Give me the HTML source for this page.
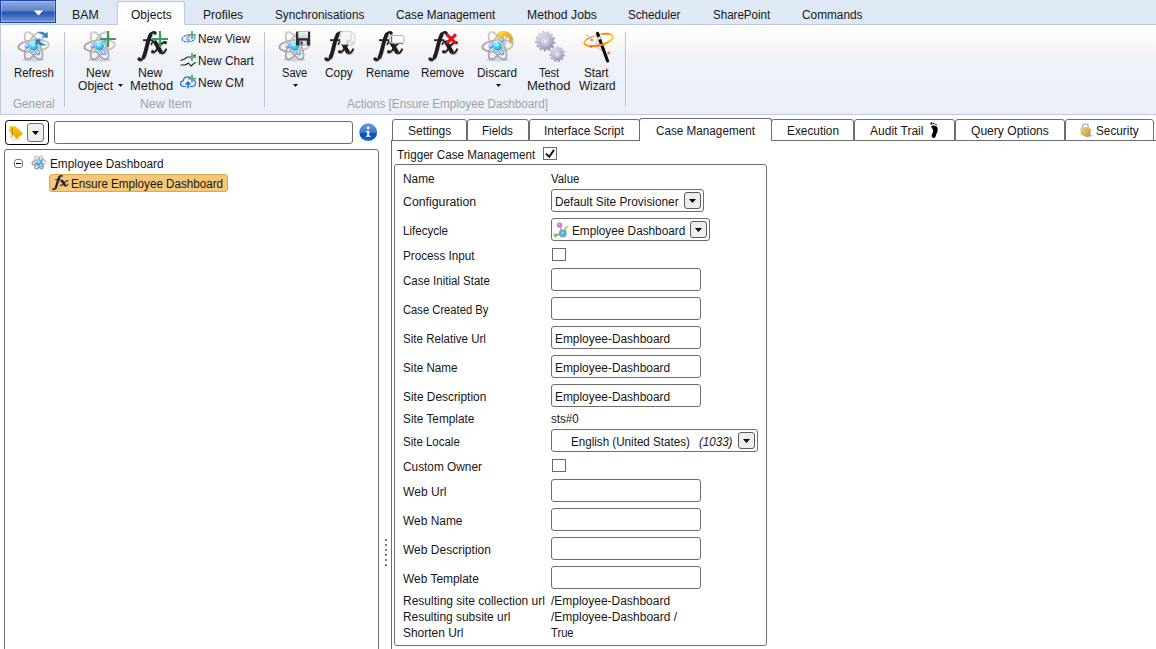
<!DOCTYPE html>
<html><head><meta charset='utf-8'><title>Objects</title><style>html,body{margin:0;padding:0}body{width:1156px;height:649px;position:relative;overflow:hidden;background:#fff;font-family:"Liberation Sans",sans-serif;font-size:12px}</style></head><body>
<div style='position:absolute;left:0px;top:0px;width:1156px;height:24px;box-sizing:border-box;background:#dfe9f5'></div>
<div style='position:absolute;left:0px;top:24px;width:1156px;height:1px;box-sizing:border-box;background:#bccbe0'></div>
<div style='position:absolute;left:0px;top:25px;width:1156px;height:89px;box-sizing:border-box;background:linear-gradient(to bottom,#ffffff 0%,#fdfdfe 8%,#f5f5f6 28.5%,#eff2f8 32.5%,#edf1f9 60%,#ebf0f9 100%)'></div>
<div style='position:absolute;left:0px;top:114px;width:1156px;height:1px;box-sizing:border-box;background:#bccbdf'></div>
<div style='position:absolute;left:0px;top:25px;width:1px;height:90px;box-sizing:border-box;background:#b9c9dc'></div>
<div style='position:absolute;left:0px;top:0px;width:56px;height:23px;box-sizing:border-box;background:linear-gradient(to bottom,#91a7dd 0%,#7d9ad8 18%,#5f86cc 45%,#2e5eb8 52%,#2c5cb6 60%,#5a80ca 85%,#7896d6 100%);border:1px solid #1b46ab;box-shadow:inset 0 0 0 1px rgba(255,255,255,.28)'></div>
<svg style='position:absolute;left:34px;top:9.5px;overflow:visible' width='9' height='6' viewBox='0 0 9 6'><path d='M0 .5H9L4.5 5.5Z' fill='#fff'/></svg>
<div style='position:absolute;left:117px;top:1px;width:68px;height:24px;box-sizing:border-box;background:linear-gradient(to bottom,#fbfcfe,#ffffff);border:1px solid #bccbe0;border-bottom:0;border-radius:3px 3px 0 0'></div>
<div style='position:absolute;left:64px;top:32px;width:1px;height:75px;box-sizing:border-box;background:#b5c5da'></div>
<div style='position:absolute;left:65px;top:32px;width:1px;height:75px;box-sizing:border-box;background:rgba(255,255,255,.45)'></div>
<div style='position:absolute;left:264px;top:32px;width:1px;height:75px;box-sizing:border-box;background:#b5c5da'></div>
<div style='position:absolute;left:265px;top:32px;width:1px;height:75px;box-sizing:border-box;background:rgba(255,255,255,.45)'></div>
<div style='position:absolute;left:625px;top:32px;width:1px;height:75px;box-sizing:border-box;background:#b5c5da'></div>
<div style='position:absolute;left:626px;top:32px;width:1px;height:75px;box-sizing:border-box;background:rgba(255,255,255,.45)'></div>
<div style='position:absolute;left:5px;top:120px;width:44px;height:25px;box-sizing:border-box;border:1px solid #000;border-radius:3.5px;background:#fff'></div>
<div style='position:absolute;left:27px;top:123px;width:17px;height:19px;box-sizing:border-box;border:1px solid #707070;border-radius:3px;background:#efefef'></div>
<svg style='position:absolute;left:32px;top:131px;overflow:visible' width='7' height='4' viewBox='0 0 7 4'><path d='M0 0H7L3.5 4Z' fill='#000'/></svg>
<div style='position:absolute;left:54px;top:121px;width:299px;height:23px;box-sizing:border-box;border:1px solid #6e6e6e;border-radius:3px;background:#fff'></div>
<div style='position:absolute;left:4px;top:149px;width:375px;height:520px;box-sizing:border-box;border:1px solid #6e6e6e;border-radius:3px;background:#fff'></div>
<div style='position:absolute;left:385px;top:539px;width:2px;height:2px;box-sizing:border-box;background:#7a7a7a'></div>
<div style='position:absolute;left:385px;top:544px;width:2px;height:2px;box-sizing:border-box;background:#7a7a7a'></div>
<div style='position:absolute;left:385px;top:549px;width:2px;height:2px;box-sizing:border-box;background:#7a7a7a'></div>
<div style='position:absolute;left:385px;top:554px;width:2px;height:2px;box-sizing:border-box;background:#7a7a7a'></div>
<div style='position:absolute;left:385px;top:559px;width:2px;height:2px;box-sizing:border-box;background:#7a7a7a'></div>
<div style='position:absolute;left:385px;top:564px;width:2px;height:2px;box-sizing:border-box;background:#7a7a7a'></div>
<div style='position:absolute;left:49px;top:174px;width:179px;height:18px;box-sizing:border-box;background:#f5c778;border:1px solid #d9a94e;border-radius:3px'></div>
<div style='position:absolute;left:14px;top:159px;width:9px;height:9px;box-sizing:border-box;border:1px solid #777;border-radius:3px;background:#fff'></div>
<div style='position:absolute;left:16px;top:163px;width:5px;height:1px;box-sizing:border-box;background:#000'></div>
<div style='position:absolute;left:391px;top:140px;width:800px;height:540px;box-sizing:border-box;border:1px solid #6e6e6e;background:#fff'></div>
<div style='position:absolute;left:392px;top:119px;width:75px;height:22px;box-sizing:border-box;border:1px solid #6e6e6e;border-radius:3px 3px 0 0;background:#fff'></div>
<div style='position:absolute;left:467px;top:119px;width:62px;height:22px;box-sizing:border-box;border:1px solid #6e6e6e;border-radius:3px 3px 0 0;background:#fff'></div>
<div style='position:absolute;left:529px;top:119px;width:111px;height:22px;box-sizing:border-box;border:1px solid #6e6e6e;border-radius:3px 3px 0 0;background:#fff'></div>
<div style='position:absolute;left:771px;top:119px;width:83px;height:22px;box-sizing:border-box;border:1px solid #6e6e6e;border-radius:3px 3px 0 0;background:#fff'></div>
<div style='position:absolute;left:854px;top:119px;width:101px;height:22px;box-sizing:border-box;border:1px solid #6e6e6e;border-radius:3px 3px 0 0;background:#fff'></div>
<div style='position:absolute;left:955px;top:119px;width:110px;height:22px;box-sizing:border-box;border:1px solid #6e6e6e;border-radius:3px 3px 0 0;background:#fff'></div>
<div style='position:absolute;left:1065px;top:119px;width:89px;height:22px;box-sizing:border-box;border:1px solid #6e6e6e;border-radius:3px 3px 0 0;background:#fff'></div>
<div style='position:absolute;left:639px;top:118px;width:133px;height:23px;box-sizing:border-box;border:1px solid #6e6e6e;border-bottom:0;border-radius:3px 3px 0 0;background:#fff'></div>
<div style='position:absolute;left:394px;top:164px;width:373px;height:482px;box-sizing:border-box;border:1px solid #6e6e6e;border-radius:3px;background:#fff'></div>
<div style='position:absolute;left:543px;top:147px;width:14px;height:13px;box-sizing:border-box;border:1px solid #6a6a6a;background:#fff'></div>
<svg style='position:absolute;left:543px;top:147px;overflow:visible' width='14' height='13' viewBox='0 0 14 13'><path d='M2.9 6.6L6.3 9.9L11 2.9' fill='none' stroke='#111' stroke-width='1.9'/></svg>
<div style='position:absolute;left:552px;top:248px;width:14px;height:13px;box-sizing:border-box;border:1px solid #6a6a6a;background:#fff'></div>
<div style='position:absolute;left:552px;top:459px;width:14px;height:13px;box-sizing:border-box;border:1px solid #6a6a6a;background:#fff'></div>
<div style='position:absolute;left:551px;top:268px;width:150px;height:23px;box-sizing:border-box;border:1px solid #6e6e6e;border-radius:3px;background:#fff'></div>
<div style='position:absolute;left:551px;top:297px;width:150px;height:23px;box-sizing:border-box;border:1px solid #6e6e6e;border-radius:3px;background:#fff'></div>
<div style='position:absolute;left:551px;top:326px;width:150px;height:23px;box-sizing:border-box;border:1px solid #6e6e6e;border-radius:3px;background:#fff'></div>
<div style='position:absolute;left:551px;top:355px;width:150px;height:23px;box-sizing:border-box;border:1px solid #6e6e6e;border-radius:3px;background:#fff'></div>
<div style='position:absolute;left:551px;top:384px;width:150px;height:23px;box-sizing:border-box;border:1px solid #6e6e6e;border-radius:3px;background:#fff'></div>
<div style='position:absolute;left:551px;top:479px;width:150px;height:23px;box-sizing:border-box;border:1px solid #6e6e6e;border-radius:3px;background:#fff'></div>
<div style='position:absolute;left:551px;top:508px;width:150px;height:23px;box-sizing:border-box;border:1px solid #6e6e6e;border-radius:3px;background:#fff'></div>
<div style='position:absolute;left:551px;top:537px;width:150px;height:23px;box-sizing:border-box;border:1px solid #6e6e6e;border-radius:3px;background:#fff'></div>
<div style='position:absolute;left:551px;top:566px;width:150px;height:23px;box-sizing:border-box;border:1px solid #6e6e6e;border-radius:3px;background:#fff'></div>
<div style='position:absolute;left:551px;top:189px;width:153px;height:23px;box-sizing:border-box;border:1px solid #6e6e6e;border-radius:3px;background:#fff'></div>
<div style='position:absolute;left:684px;top:192px;width:17px;height:17px;box-sizing:border-box;border:1px solid #5a5a5a;border-radius:3px;background:#ededed'></div>
<svg style='position:absolute;left:689px;top:199px;overflow:visible' width='7' height='4' viewBox='0 0 7 4'><path d='M0 0H7L3.5 4Z' fill='#000'/></svg>
<div style='position:absolute;left:551px;top:218px;width:159px;height:23px;box-sizing:border-box;border:1px solid #6e6e6e;border-radius:3px;background:#fff'></div>
<div style='position:absolute;left:690px;top:221px;width:17px;height:17px;box-sizing:border-box;border:1px solid #5a5a5a;border-radius:3px;background:#ededed'></div>
<svg style='position:absolute;left:695px;top:228px;overflow:visible' width='7' height='4' viewBox='0 0 7 4'><path d='M0 0H7L3.5 4Z' fill='#000'/></svg>
<div style='position:absolute;left:551px;top:429px;width:207px;height:23px;box-sizing:border-box;border:1px solid #6e6e6e;border-radius:3px;background:#fff'></div>
<div style='position:absolute;left:738px;top:432px;width:17px;height:17px;box-sizing:border-box;border:1px solid #5a5a5a;border-radius:3px;background:#ededed'></div>
<svg style='position:absolute;left:743px;top:439px;overflow:visible' width='7' height='4' viewBox='0 0 7 4'><path d='M0 0H7L3.5 4Z' fill='#000'/></svg>
<span style='position:absolute;left:72.47px;top:8px;white-space:pre;font-size:12px;line-height:14px;color:#161616;transform-origin:0 0;transform:scaleX(1.0250)'>BAM</span>
<span style='position:absolute;left:130.50px;top:8px;white-space:pre;font-size:12px;line-height:14px;color:#161616;transform-origin:0 0;transform:scaleX(1.0013)'>Objects</span>
<span style='position:absolute;left:202.60px;top:8px;white-space:pre;font-size:12px;line-height:14px;color:#161616;transform-origin:0 0;transform:scaleX(1.0026)'>Profiles</span>
<span style='position:absolute;left:274.51px;top:8px;white-space:pre;font-size:12px;line-height:14px;color:#161616;transform-origin:0 0;transform:scaleX(0.9768)'>Synchronisations</span>
<span style='position:absolute;left:395.71px;top:8px;white-space:pre;font-size:12px;line-height:14px;color:#161616;transform-origin:0 0;transform:scaleX(0.9787)'>Case Management</span>
<span style='position:absolute;left:526.68px;top:8px;white-space:pre;font-size:12px;line-height:14px;color:#161616;transform-origin:0 0;transform:scaleX(1.0156)'>Method Jobs</span>
<span style='position:absolute;left:628.41px;top:8px;white-space:pre;font-size:12px;line-height:14px;color:#161616;transform-origin:0 0;transform:scaleX(0.9701)'>Scheduler</span>
<span style='position:absolute;left:712.92px;top:8px;white-space:pre;font-size:12px;line-height:14px;color:#161616;transform-origin:0 0;transform:scaleX(0.9634)'>SharePoint</span>
<span style='position:absolute;left:802.31px;top:8px;white-space:pre;font-size:12px;line-height:14px;color:#161616;transform-origin:0 0;transform:scaleX(0.9868)'>Commands</span>
<span style='position:absolute;left:13.75px;top:66px;white-space:pre;font-size:12px;line-height:14px;color:#161616;transform-origin:0 0;transform:scaleX(0.9466)'>Refresh</span>
<span style='position:absolute;left:85.99px;top:66px;white-space:pre;font-size:12px;line-height:14px;color:#161616;transform-origin:0 0;transform:scaleX(1.0087)'>New</span>
<span style='position:absolute;left:78.19px;top:79px;white-space:pre;font-size:12px;line-height:14px;color:#161616;transform-origin:0 0;transform:scaleX(1.0102)'>Object</span>
<span style='position:absolute;left:137.88px;top:66px;white-space:pre;font-size:12px;line-height:14px;color:#161616;transform-origin:0 0;transform:scaleX(1.0174)'>New</span>
<span style='position:absolute;left:129.52px;top:79px;white-space:pre;font-size:12px;line-height:14px;color:#161616;transform-origin:0 0;transform:scaleX(1.0771)'>Method</span>
<span style='position:absolute;left:198.12px;top:32px;white-space:pre;font-size:12px;line-height:14px;color:#161616;transform-origin:0 0;transform:scaleX(0.9846)'>New View</span>
<span style='position:absolute;left:198.12px;top:54px;white-space:pre;font-size:12px;line-height:14px;color:#161616;transform-origin:0 0;transform:scaleX(0.9848)'>New Chart</span>
<span style='position:absolute;left:198.10px;top:76px;white-space:pre;font-size:12px;line-height:14px;color:#161616;transform-origin:0 0;transform:scaleX(0.9977)'>New CM</span>
<span style='position:absolute;left:282.34px;top:66px;white-space:pre;font-size:12px;line-height:14px;color:#161616;transform-origin:0 0;transform:scaleX(0.9219)'>Save</span>
<span style='position:absolute;left:324.71px;top:66px;white-space:pre;font-size:12px;line-height:14px;color:#161616;transform-origin:0 0;transform:scaleX(0.9891)'>Copy</span>
<span style='position:absolute;left:366.34px;top:66px;white-space:pre;font-size:12px;line-height:14px;color:#161616;transform-origin:0 0;transform:scaleX(0.9577)'>Rename</span>
<span style='position:absolute;left:420.83px;top:66px;white-space:pre;font-size:12px;line-height:14px;color:#161616;transform-origin:0 0;transform:scaleX(0.9688)'>Remove</span>
<span style='position:absolute;left:477.42px;top:66px;white-space:pre;font-size:12px;line-height:14px;color:#161616;transform-origin:0 0;transform:scaleX(0.9846)'>Discard</span>
<span style='position:absolute;left:538.67px;top:66px;white-space:pre;font-size:12px;line-height:14px;color:#161616;transform-origin:0 0;transform:scaleX(0.9149)'>Test</span>
<span style='position:absolute;left:527.42px;top:79px;white-space:pre;font-size:12px;line-height:14px;color:#161616;transform-origin:0 0;transform:scaleX(1.0850)'>Method</span>
<span style='position:absolute;left:583.52px;top:66px;white-space:pre;font-size:12px;line-height:14px;color:#161616;transform-origin:0 0;transform:scaleX(0.9697)'>Start</span>
<span style='position:absolute;left:578.70px;top:79px;white-space:pre;font-size:12px;line-height:14px;color:#161616;transform-origin:0 0;transform:scaleX(0.9808)'>Wizard</span>
<span style='position:absolute;left:12.51px;top:97px;white-space:pre;font-size:12px;line-height:14px;color:#a2a2a2;transform-origin:0 0;transform:scaleX(0.9759)'>General</span>
<span style='position:absolute;left:139.98px;top:97px;white-space:pre;font-size:12px;line-height:14px;color:#a2a2a2;transform-origin:0 0;transform:scaleX(1.0224)'>New Item</span>
<span style='position:absolute;left:346.60px;top:97px;white-space:pre;font-size:12px;line-height:14px;color:#a2a2a2;transform-origin:0 0;transform:scaleX(0.9749)'>Actions [Ensure Employee Dashboard]</span>
<span style='position:absolute;left:49.62px;top:157px;white-space:pre;font-size:12px;line-height:14px;color:#161616;transform-origin:0 0;transform:scaleX(0.9837)'>Employee Dashboard</span>
<span style='position:absolute;left:71.03px;top:177px;white-space:pre;font-size:12px;line-height:14px;color:#161616;transform-origin:0 0;transform:scaleX(0.9697)'>Ensure Employee Dashboard</span>
<span style='position:absolute;left:407.50px;top:124px;white-space:pre;font-size:12px;line-height:14px;color:#161616;transform-origin:0 0;transform:scaleX(0.9976)'>Settings</span>
<span style='position:absolute;left:482.14px;top:124px;white-space:pre;font-size:12px;line-height:14px;color:#161616;transform-origin:0 0;transform:scaleX(0.9639)'>Fields</span>
<span style='position:absolute;left:544.31px;top:124px;white-space:pre;font-size:12px;line-height:14px;color:#161616;transform-origin:0 0;transform:scaleX(0.9906)'>Interface Script</span>
<span style='position:absolute;left:656.11px;top:124px;white-space:pre;font-size:12px;line-height:14px;color:#161616;transform-origin:0 0;transform:scaleX(0.9757)'>Case Management</span>
<span style='position:absolute;left:786.61px;top:124px;white-space:pre;font-size:12px;line-height:14px;color:#161616;transform-origin:0 0;transform:scaleX(0.9863)'>Execution</span>
<span style='position:absolute;left:870.40px;top:124px;white-space:pre;font-size:12px;line-height:14px;color:#161616;transform-origin:0 0;transform:scaleX(1.0019)'>Audit Trail</span>
<span style='position:absolute;left:971.10px;top:124px;white-space:pre;font-size:12px;line-height:14px;color:#161616;transform-origin:0 0;transform:scaleX(1.0065)'>Query Options</span>
<span style='position:absolute;left:1096.01px;top:124px;white-space:pre;font-size:12px;line-height:14px;color:#161616;transform-origin:0 0;transform:scaleX(0.9825)'>Security</span>
<span style='position:absolute;left:397.26px;top:148px;white-space:pre;font-size:12px;line-height:14px;color:#161616;transform-origin:0 0;transform:scaleX(0.9718)'>Trigger Case Management</span>
<span style='position:absolute;left:403.21px;top:172px;white-space:pre;font-size:12px;line-height:14px;color:#161616;transform-origin:0 0;transform:scaleX(0.9869)'>Name</span>
<span style='position:absolute;left:551.40px;top:172px;white-space:pre;font-size:12px;line-height:14px;color:#161616;transform-origin:0 0;transform:scaleX(0.9504)'>Value</span>
<span style='position:absolute;left:402.99px;top:195px;white-space:pre;font-size:12px;line-height:14px;color:#161616;transform-origin:0 0;transform:scaleX(1.0257)'>Configuration</span>
<span style='position:absolute;left:555.31px;top:195px;white-space:pre;font-size:12px;line-height:14px;color:#161616;transform-origin:0 0;transform:scaleX(0.9859)'>Default Site Provisioner</span>
<span style='position:absolute;left:402.54px;top:224px;white-space:pre;font-size:12px;line-height:14px;color:#161616;transform-origin:0 0;transform:scaleX(0.9635)'>Lifecycle</span>
<span style='position:absolute;left:571.52px;top:224px;white-space:pre;font-size:12px;line-height:14px;color:#161616;transform-origin:0 0;transform:scaleX(0.9811)'>Employee Dashboard</span>
<span style='position:absolute;left:402.53px;top:249px;white-space:pre;font-size:12px;line-height:14px;color:#161616;transform-origin:0 0;transform:scaleX(0.9744)'>Process Input</span>
<span style='position:absolute;left:403.02px;top:274px;white-space:pre;font-size:12px;line-height:14px;color:#161616;transform-origin:0 0;transform:scaleX(0.9582)'>Case Initial State</span>
<span style='position:absolute;left:403.03px;top:303px;white-space:pre;font-size:12px;line-height:14px;color:#161616;transform-origin:0 0;transform:scaleX(0.9344)'>Case Created By</span>
<span style='position:absolute;left:403.02px;top:332px;white-space:pre;font-size:12px;line-height:14px;color:#161616;transform-origin:0 0;transform:scaleX(0.9640)'>Site Relative Url</span>
<span style='position:absolute;left:554.61px;top:332px;white-space:pre;font-size:12px;line-height:14px;color:#161616;transform-origin:0 0;transform:scaleX(0.9917)'>Employee-Dashboard</span>
<span style='position:absolute;left:403.01px;top:361px;white-space:pre;font-size:12px;line-height:14px;color:#161616;transform-origin:0 0;transform:scaleX(0.9745)'>Site Name</span>
<span style='position:absolute;left:554.61px;top:361px;white-space:pre;font-size:12px;line-height:14px;color:#161616;transform-origin:0 0;transform:scaleX(0.9917)'>Employee-Dashboard</span>
<span style='position:absolute;left:403.00px;top:390px;white-space:pre;font-size:12px;line-height:14px;color:#161616;transform-origin:0 0;transform:scaleX(0.9909)'>Site Description</span>
<span style='position:absolute;left:554.61px;top:390px;white-space:pre;font-size:12px;line-height:14px;color:#161616;transform-origin:0 0;transform:scaleX(0.9917)'>Employee-Dashboard</span>
<span style='position:absolute;left:403.01px;top:412px;white-space:pre;font-size:12px;line-height:14px;color:#161616;transform-origin:0 0;transform:scaleX(0.9846)'>Site Template</span>
<span style='position:absolute;left:550.72px;top:412px;white-space:pre;font-size:12px;line-height:14px;color:#161616;transform-origin:0 0;transform:scaleX(0.9658)'>sts#0</span>
<span style='position:absolute;left:403.02px;top:435px;white-space:pre;font-size:12px;line-height:14px;color:#161616;transform-origin:0 0;transform:scaleX(0.9562)'>Site Locale</span>
<span style='position:absolute;left:571.43px;top:435px;white-space:pre;font-size:12px;line-height:14px;color:#161616;transform-origin:0 0;transform:scaleX(0.9686)'>English (United States)</span>
<span style='position:absolute;left:699.42px;top:435px;white-space:pre;font-size:12px;line-height:14px;color:#161616;font-style:italic;transform-origin:0 0;transform:scaleX(0.9642)'>(1033)</span>
<span style='position:absolute;left:403.01px;top:460px;white-space:pre;font-size:12px;line-height:14px;color:#161616;transform-origin:0 0;transform:scaleX(0.9868)'>Custom Owner</span>
<span style='position:absolute;left:402.90px;top:485px;white-space:pre;font-size:12px;line-height:14px;color:#161616;transform-origin:0 0;transform:scaleX(1.0059)'>Web Url</span>
<span style='position:absolute;left:402.90px;top:514px;white-space:pre;font-size:12px;line-height:14px;color:#161616;transform-origin:0 0;transform:scaleX(0.9941)'>Web Name</span>
<span style='position:absolute;left:402.90px;top:543px;white-space:pre;font-size:12px;line-height:14px;color:#161616;transform-origin:0 0;transform:scaleX(1.0011)'>Web Description</span>
<span style='position:absolute;left:402.90px;top:572px;white-space:pre;font-size:12px;line-height:14px;color:#161616;transform-origin:0 0;transform:scaleX(0.9941)'>Web Template</span>
<span style='position:absolute;left:402.50px;top:594px;white-space:pre;font-size:12px;line-height:14px;color:#161616;transform-origin:0 0;transform:scaleX(0.9989)'>Resulting site collection url</span>
<span style='position:absolute;left:551.00px;top:594px;white-space:pre;font-size:12px;line-height:14px;color:#161616;transform-origin:0 0;transform:scaleX(0.9971)'>/Employee-Dashboard</span>
<span style='position:absolute;left:402.51px;top:610px;white-space:pre;font-size:12px;line-height:14px;color:#161616;transform-origin:0 0;transform:scaleX(0.9929)'>Resulting subsite url</span>
<span style='position:absolute;left:551.00px;top:610px;white-space:pre;font-size:12px;line-height:14px;color:#161616;transform-origin:0 0;transform:scaleX(1.0000)'>/Employee-Dashboard /</span>
<span style='position:absolute;left:403.00px;top:626px;white-space:pre;font-size:12px;line-height:14px;color:#161616;transform-origin:0 0;transform:scaleX(0.9950)'>Shorten Url</span>
<span style='position:absolute;left:550.77px;top:626px;white-space:pre;font-size:12px;line-height:14px;color:#161616;transform-origin:0 0;transform:scaleX(0.9319)'>True</span>
<svg style='position:absolute;left:18px;top:31px;overflow:visible' width='32' height='30' viewBox='0 0 32 30'><defs><radialGradient id='n1' cx='.4' cy='.3' r='.7'><stop offset='0' stop-color='#e8ffff'/><stop offset='.45' stop-color='#3fd6f7'/><stop offset='1' stop-color='#0a9fe0'/></radialGradient><radialGradient id='e2' cx='.4' cy='.3' r='.7'><stop offset='0' stop-color='#f4f6ff'/><stop offset='.45' stop-color='#9dbcff'/><stop offset='1' stop-color='#3f7fff'/></radialGradient><linearGradient id='o3' gradientUnits='userSpaceOnUse' x1='-15' y1='0' x2='15' y2='0'><stop offset='0' stop-color='#7a7a7a'/><stop offset='1' stop-color='#b4b4b4'/></linearGradient><linearGradient id='o4' gradientUnits='userSpaceOnUse' x1='-15' y1='0' x2='15' y2='0'><stop offset='0' stop-color='#b6b6b6'/><stop offset='1' stop-color='#7c7c7c'/></linearGradient></defs><g transform='translate(15.6 14.8) scale(1)'><ellipse cx='0' cy='14' rx='12' ry='1.6' fill='#000' opacity='.13'/><ellipse cx='0' cy='0' rx='15.2' ry='5.8' transform='rotate(-5)' fill='none' stroke='url(#o3)' stroke-width='1.7' opacity='.95'/><ellipse cx='0' cy='0' rx='15.2' ry='5.8' transform='rotate(-5)' fill='none' stroke='#ececec' stroke-width='0.55' opacity='.9'/><ellipse cx='0' cy='0' rx='15.2' ry='5.8' transform='rotate(61)' fill='none' stroke='url(#o4)' stroke-width='1.7' opacity='.95'/><ellipse cx='0' cy='0' rx='15.2' ry='5.8' transform='rotate(61)' fill='none' stroke='#ececec' stroke-width='0.55' opacity='.9'/><ellipse cx='0' cy='0' rx='15.2' ry='5.8' transform='rotate(119)' fill='none' stroke='url(#o4)' stroke-width='1.7' opacity='.95'/><ellipse cx='0' cy='0' rx='15.2' ry='5.8' transform='rotate(119)' fill='none' stroke='#ececec' stroke-width='0.55' opacity='.9'/><circle cx='0' cy='.3' r='4.4' fill='url(#n1)'/><circle cx='-6.8' cy='0.1' r='2.35' fill='url(#e2)'/><circle cx='4.3' cy='7.2' r='2.35' fill='url(#e2)'/><circle cx='4.2' cy='-5.6' r='2.35' fill='url(#e2)'/></g><path d='M19.4 2C22 .2 25.4 .4 27.2 2.4L29.6 1L29.9 6.7L24.2 6.6L26 4.6C24.6 3 22 2.4 19.4 2Z' fill='#2a86b8'/><path d='M28.4 13.4C25.6 15.2 22 14.6 20.2 12.4L18 14L17.5 8.3L23.2 8.6L21.6 10.4C23 12 25.6 12.8 28.4 13.4Z' fill='#2482b4'/></svg>
<svg style='position:absolute;left:84px;top:31px;overflow:visible' width='32' height='30' viewBox='0 0 32 30'><defs><radialGradient id='n5' cx='.4' cy='.3' r='.7'><stop offset='0' stop-color='#e8ffff'/><stop offset='.45' stop-color='#3fd6f7'/><stop offset='1' stop-color='#0a9fe0'/></radialGradient><radialGradient id='e6' cx='.4' cy='.3' r='.7'><stop offset='0' stop-color='#f4f6ff'/><stop offset='.45' stop-color='#9dbcff'/><stop offset='1' stop-color='#3f7fff'/></radialGradient><linearGradient id='o7' gradientUnits='userSpaceOnUse' x1='-15' y1='0' x2='15' y2='0'><stop offset='0' stop-color='#7a7a7a'/><stop offset='1' stop-color='#b4b4b4'/></linearGradient><linearGradient id='o8' gradientUnits='userSpaceOnUse' x1='-15' y1='0' x2='15' y2='0'><stop offset='0' stop-color='#b6b6b6'/><stop offset='1' stop-color='#7c7c7c'/></linearGradient></defs><g transform='translate(15.6 14.8) scale(1)'><ellipse cx='0' cy='14' rx='12' ry='1.6' fill='#000' opacity='.13'/><ellipse cx='0' cy='0' rx='15.2' ry='5.8' transform='rotate(-5)' fill='none' stroke='url(#o7)' stroke-width='1.7' opacity='.95'/><ellipse cx='0' cy='0' rx='15.2' ry='5.8' transform='rotate(-5)' fill='none' stroke='#ececec' stroke-width='0.55' opacity='.9'/><ellipse cx='0' cy='0' rx='15.2' ry='5.8' transform='rotate(61)' fill='none' stroke='url(#o8)' stroke-width='1.7' opacity='.95'/><ellipse cx='0' cy='0' rx='15.2' ry='5.8' transform='rotate(61)' fill='none' stroke='#ececec' stroke-width='0.55' opacity='.9'/><ellipse cx='0' cy='0' rx='15.2' ry='5.8' transform='rotate(119)' fill='none' stroke='url(#o8)' stroke-width='1.7' opacity='.95'/><ellipse cx='0' cy='0' rx='15.2' ry='5.8' transform='rotate(119)' fill='none' stroke='#ececec' stroke-width='0.55' opacity='.9'/><circle cx='0' cy='.3' r='4.4' fill='url(#n5)'/><circle cx='-6.8' cy='0.1' r='2.35' fill='url(#e6)'/><circle cx='4.3' cy='7.2' r='2.35' fill='url(#e6)'/><circle cx='4.2' cy='-5.6' r='2.35' fill='url(#e6)'/></g><path d='M16 8H32M24 0V16' stroke='#3a9a5e' stroke-width='2.2' fill='none'/></svg>
<svg style='position:absolute;left:137px;top:31px;overflow:visible' width='32' height='31' viewBox='0 0 32 31'><g opacity='.16' transform='translate(.5 .9)'><g fill='none' stroke='#000' stroke-linecap='round' stroke-linejoin='round'><path d='M13.7 3.4C12.2 6.4 11 10.4 9.8 15.2C8.8 19.6 8 23 6.6 26' stroke-width='3.80'/><path d='M13.2 4.2C14.2 1.4 16.4 .5 18.3 1.7' stroke-width='2.20'/><path d='M7 25.2C5.6 28.8 3.4 30 1.7 28.3' stroke-width='2.30'/><path d='M6 9.1H16.2' stroke-width='1.70' stroke-linecap='butt'/><path d='M14.3 13.3C15 11.2 16.2 9.9 17.6 10.5' stroke-width='1.50'/><path d='M17.4 10.6C19.4 12.4 22 18.6 24.4 21.6' stroke-width='4.10' stroke-linecap='butt'/><path d='M23.6 21.4C25.6 23.6 27.8 21.2 29 18.3' stroke-width='1.90'/><path d='M28.4 11.5C26 10.3 24.4 12.6 22 15.4C19.6 18.2 18.2 22.6 15.6 21.3' stroke-width='1.80'/></g><g fill='#000'><circle cx='18' cy='2.1' r='1.55'/><circle cx='2.2' cy='27.9' r='1.75'/><circle cx='28.3' cy='11.5' r='1.50'/><circle cx='15.7' cy='20.7' r='1.65'/></g></g><g fill='none' stroke='#1e1e1e' stroke-linecap='round' stroke-linejoin='round'><path d='M13.7 3.4C12.2 6.4 11 10.4 9.8 15.2C8.8 19.6 8 23 6.6 26' stroke-width='3.80'/><path d='M13.2 4.2C14.2 1.4 16.4 .5 18.3 1.7' stroke-width='2.20'/><path d='M7 25.2C5.6 28.8 3.4 30 1.7 28.3' stroke-width='2.30'/><path d='M6 9.1H16.2' stroke-width='1.70' stroke-linecap='butt'/><path d='M14.3 13.3C15 11.2 16.2 9.9 17.6 10.5' stroke-width='1.50'/><path d='M17.4 10.6C19.4 12.4 22 18.6 24.4 21.6' stroke-width='4.10' stroke-linecap='butt'/><path d='M23.6 21.4C25.6 23.6 27.8 21.2 29 18.3' stroke-width='1.90'/><path d='M28.4 11.5C26 10.3 24.4 12.6 22 15.4C19.6 18.2 18.2 22.6 15.6 21.3' stroke-width='1.80'/></g><g fill='#1e1e1e'><circle cx='18' cy='2.1' r='1.55'/><circle cx='2.2' cy='27.9' r='1.75'/><circle cx='28.3' cy='11.5' r='1.50'/><circle cx='15.7' cy='20.7' r='1.65'/></g></svg>
<svg style='position:absolute;left:152px;top:31px;overflow:visible' width='16' height='16' viewBox='0 0 16 16'><path d='M0 8H16M8 0V16' stroke='#3a9a5e' stroke-width='2.2' fill='none'/></svg>
<svg style='position:absolute;left:180px;top:30px;overflow:visible' width='16' height='16' viewBox='0 0 16 16'><ellipse cx='8.5' cy='8.4' rx='6.5' ry='3.4' transform='rotate(-8 8.5 8.4)' fill='none' stroke='#2b7fff' stroke-width='1.25' stroke-dasharray='1.3 1.5' stroke-linecap='round'/><path d='M9.6 7.2A1.7 1.7 0 1 0 9.9 9.4' fill='none' stroke='#2b7fff' stroke-width='1.1' stroke-dasharray='1.2 1' stroke-linecap='round'/><path d='M8 4.9H16M12 0.9V8.9' stroke='#62ab80' stroke-width='1.9' fill='none'/></svg>
<svg style='position:absolute;left:180px;top:53.5px;overflow:visible' width='16' height='14' viewBox='0 0 16 14'><path d='M.5 6.5L4 5.2L8.5 2.6L11 4L15.5 .8' fill='none' stroke='#1a1a1a' stroke-width='1.1'/><path d='M.5 11H5L8.5 9.2L11 12L15.5 8.2' fill='none' stroke='#1a1a1a' stroke-width='1.1'/><path d='M8 3H16M12 -1V7' stroke='#62ab80' stroke-width='1.9' fill='none'/></svg>
<svg style='position:absolute;left:180px;top:75.2px;overflow:visible' width='16' height='14' viewBox='0 0 16 14'><path d='M6.2 11.5H3.6C1.8 11.5 .6 10.3 .6 8.6C.6 7 1.8 5.9 3.2 5.8C3.6 3.4 5.4 1.9 7.7 1.9C9.6 1.9 11.2 3 11.9 4.7C14 4.6 15.5 6.1 15.5 8C15.5 10 14 11.5 12.2 11.5H9.8' fill='none' stroke='#1f6fe8' stroke-width='1.2'/><path d='M8 13.2V8M5.6 9.6L8 7.2L10.4 9.6' fill='none' stroke='#1f6fe8' stroke-width='1.6'/><path d='M8 3.6H16M12 -0.4V7.6' stroke='#62ab80' stroke-width='1.9' fill='none'/></svg>
<svg style='position:absolute;left:117.6px;top:84.3px;overflow:visible' width='5' height='3' viewBox='0 0 5 3'><path d='M0 0H5L2.5 3Z' fill='#111'/></svg>
<svg style='position:absolute;left:293px;top:84.3px;overflow:visible' width='5' height='3' viewBox='0 0 5 3'><path d='M0 0H5L2.5 3Z' fill='#111'/></svg>
<svg style='position:absolute;left:496px;top:84.3px;overflow:visible' width='5' height='3' viewBox='0 0 5 3'><path d='M0 0H5L2.5 3Z' fill='#111'/></svg>
<svg style='position:absolute;left:279px;top:31px;overflow:visible' width='32' height='30' viewBox='0 0 32 30'><defs><radialGradient id='n10' cx='.4' cy='.3' r='.7'><stop offset='0' stop-color='#e8ffff'/><stop offset='.45' stop-color='#3fd6f7'/><stop offset='1' stop-color='#0a9fe0'/></radialGradient><radialGradient id='e11' cx='.4' cy='.3' r='.7'><stop offset='0' stop-color='#f4f6ff'/><stop offset='.45' stop-color='#9dbcff'/><stop offset='1' stop-color='#3f7fff'/></radialGradient><linearGradient id='o12' gradientUnits='userSpaceOnUse' x1='-15' y1='0' x2='15' y2='0'><stop offset='0' stop-color='#7a7a7a'/><stop offset='1' stop-color='#b4b4b4'/></linearGradient><linearGradient id='o13' gradientUnits='userSpaceOnUse' x1='-15' y1='0' x2='15' y2='0'><stop offset='0' stop-color='#b6b6b6'/><stop offset='1' stop-color='#7c7c7c'/></linearGradient></defs><g transform='translate(15.6 14.8) scale(1)'><ellipse cx='0' cy='14' rx='12' ry='1.6' fill='#000' opacity='.13'/><ellipse cx='0' cy='0' rx='15.2' ry='5.8' transform='rotate(-5)' fill='none' stroke='url(#o12)' stroke-width='1.7' opacity='.95'/><ellipse cx='0' cy='0' rx='15.2' ry='5.8' transform='rotate(-5)' fill='none' stroke='#ececec' stroke-width='0.55' opacity='.9'/><ellipse cx='0' cy='0' rx='15.2' ry='5.8' transform='rotate(61)' fill='none' stroke='url(#o13)' stroke-width='1.7' opacity='.95'/><ellipse cx='0' cy='0' rx='15.2' ry='5.8' transform='rotate(61)' fill='none' stroke='#ececec' stroke-width='0.55' opacity='.9'/><ellipse cx='0' cy='0' rx='15.2' ry='5.8' transform='rotate(119)' fill='none' stroke='url(#o13)' stroke-width='1.7' opacity='.95'/><ellipse cx='0' cy='0' rx='15.2' ry='5.8' transform='rotate(119)' fill='none' stroke='#ececec' stroke-width='0.55' opacity='.9'/><circle cx='0' cy='.3' r='4.4' fill='url(#n10)'/><circle cx='-6.8' cy='0.1' r='2.35' fill='url(#e11)'/><circle cx='4.3' cy='7.2' r='2.35' fill='url(#e11)'/><circle cx='4.2' cy='-5.6' r='2.35' fill='url(#e11)'/></g><defs><linearGradient id='fl9' x1='0' y1='0' x2='0' y2='1'><stop offset='0' stop-color='#f4f6f8'/><stop offset='1' stop-color='#c5cfdb'/></linearGradient></defs><rect x='17' y='.6' width='14.2' height='14' rx='.8' fill='#2e2e30'/><rect x='19.2' y='.6' width='9.8' height='6.6' fill='url(#fl9)'/><rect x='20.6' y='9.6' width='7.2' height='5' fill='#d8dce2'/><rect x='21.6' y='10.4' width='2' height='3.4' fill='#2e2e30'/></svg>
<svg style='position:absolute;left:324px;top:31px;overflow:visible' width='32' height='31' viewBox='0 0 32 31'><g opacity='.16' transform='translate(.5 .9)'><g fill='none' stroke='#000' stroke-linecap='round' stroke-linejoin='round'><path d='M13.7 3.4C12.2 6.4 11 10.4 9.8 15.2C8.8 19.6 8 23 6.6 26' stroke-width='3.80'/><path d='M13.2 4.2C14.2 1.4 16.4 .5 18.3 1.7' stroke-width='2.20'/><path d='M7 25.2C5.6 28.8 3.4 30 1.7 28.3' stroke-width='2.30'/><path d='M6 9.1H16.2' stroke-width='1.70' stroke-linecap='butt'/><path d='M14.3 13.3C15 11.2 16.2 9.9 17.6 10.5' stroke-width='1.50'/><path d='M17.4 10.6C19.4 12.4 22 18.6 24.4 21.6' stroke-width='4.10' stroke-linecap='butt'/><path d='M23.6 21.4C25.6 23.6 27.8 21.2 29 18.3' stroke-width='1.90'/><path d='M28.4 11.5C26 10.3 24.4 12.6 22 15.4C19.6 18.2 18.2 22.6 15.6 21.3' stroke-width='1.80'/></g><g fill='#000'><circle cx='18' cy='2.1' r='1.55'/><circle cx='2.2' cy='27.9' r='1.75'/><circle cx='28.3' cy='11.5' r='1.50'/><circle cx='15.7' cy='20.7' r='1.65'/></g></g><g fill='none' stroke='#1e1e1e' stroke-linecap='round' stroke-linejoin='round'><path d='M13.7 3.4C12.2 6.4 11 10.4 9.8 15.2C8.8 19.6 8 23 6.6 26' stroke-width='3.80'/><path d='M13.2 4.2C14.2 1.4 16.4 .5 18.3 1.7' stroke-width='2.20'/><path d='M7 25.2C5.6 28.8 3.4 30 1.7 28.3' stroke-width='2.30'/><path d='M6 9.1H16.2' stroke-width='1.70' stroke-linecap='butt'/><path d='M14.3 13.3C15 11.2 16.2 9.9 17.6 10.5' stroke-width='1.50'/><path d='M17.4 10.6C19.4 12.4 22 18.6 24.4 21.6' stroke-width='4.10' stroke-linecap='butt'/><path d='M23.6 21.4C25.6 23.6 27.8 21.2 29 18.3' stroke-width='1.90'/><path d='M28.4 11.5C26 10.3 24.4 12.6 22 15.4C19.6 18.2 18.2 22.6 15.6 21.3' stroke-width='1.80'/></g><g fill='#1e1e1e'><circle cx='18' cy='2.1' r='1.55'/><circle cx='2.2' cy='27.9' r='1.75'/><circle cx='28.3' cy='11.5' r='1.50'/><circle cx='15.7' cy='20.7' r='1.65'/></g></svg>
<svg style='position:absolute;left:339.6px;top:31px;overflow:visible' width='16' height='15' viewBox='0 0 16 15'><path d='M8 2.1H14.9V11L11.6 14.6H8Z' fill='#f4f4f4' stroke='#c9c9c9' stroke-width='.7'/><path d='M14.9 11H11.6V14.6Z' fill='#dadada' stroke='#c4c4c4' stroke-width='.4'/><path d='M.3 .4H11V9L6.4 13.6H.3Z' fill='#f6f6f6' stroke='#c2c2c2' stroke-width='.7'/><path d='M11 9H6.4V13.6Z' fill='#dedede' stroke='#bdbdbd' stroke-width='.4'/></svg>
<svg style='position:absolute;left:373px;top:31px;overflow:visible' width='32' height='31' viewBox='0 0 32 31'><g opacity='.16' transform='translate(.5 .9)'><g fill='none' stroke='#000' stroke-linecap='round' stroke-linejoin='round'><path d='M13.7 3.4C12.2 6.4 11 10.4 9.8 15.2C8.8 19.6 8 23 6.6 26' stroke-width='3.80'/><path d='M13.2 4.2C14.2 1.4 16.4 .5 18.3 1.7' stroke-width='2.20'/><path d='M7 25.2C5.6 28.8 3.4 30 1.7 28.3' stroke-width='2.30'/><path d='M6 9.1H16.2' stroke-width='1.70' stroke-linecap='butt'/><path d='M14.3 13.3C15 11.2 16.2 9.9 17.6 10.5' stroke-width='1.50'/><path d='M17.4 10.6C19.4 12.4 22 18.6 24.4 21.6' stroke-width='4.10' stroke-linecap='butt'/><path d='M23.6 21.4C25.6 23.6 27.8 21.2 29 18.3' stroke-width='1.90'/><path d='M28.4 11.5C26 10.3 24.4 12.6 22 15.4C19.6 18.2 18.2 22.6 15.6 21.3' stroke-width='1.80'/></g><g fill='#000'><circle cx='18' cy='2.1' r='1.55'/><circle cx='2.2' cy='27.9' r='1.75'/><circle cx='28.3' cy='11.5' r='1.50'/><circle cx='15.7' cy='20.7' r='1.65'/></g></g><g fill='none' stroke='#1e1e1e' stroke-linecap='round' stroke-linejoin='round'><path d='M13.7 3.4C12.2 6.4 11 10.4 9.8 15.2C8.8 19.6 8 23 6.6 26' stroke-width='3.80'/><path d='M13.2 4.2C14.2 1.4 16.4 .5 18.3 1.7' stroke-width='2.20'/><path d='M7 25.2C5.6 28.8 3.4 30 1.7 28.3' stroke-width='2.30'/><path d='M6 9.1H16.2' stroke-width='1.70' stroke-linecap='butt'/><path d='M14.3 13.3C15 11.2 16.2 9.9 17.6 10.5' stroke-width='1.50'/><path d='M17.4 10.6C19.4 12.4 22 18.6 24.4 21.6' stroke-width='4.10' stroke-linecap='butt'/><path d='M23.6 21.4C25.6 23.6 27.8 21.2 29 18.3' stroke-width='1.90'/><path d='M28.4 11.5C26 10.3 24.4 12.6 22 15.4C19.6 18.2 18.2 22.6 15.6 21.3' stroke-width='1.80'/></g><g fill='#1e1e1e'><circle cx='18' cy='2.1' r='1.55'/><circle cx='2.2' cy='27.9' r='1.75'/><circle cx='28.3' cy='11.5' r='1.50'/><circle cx='15.7' cy='20.7' r='1.65'/></g></svg>
<svg style='position:absolute;left:388.7px;top:35px;overflow:visible' width='16' height='9' viewBox='0 0 16 9'><rect x='.5' y='.5' width='14.4' height='7.6' rx='2' fill='#fff' stroke='#b4b4b4' stroke-width='1'/><path d='M2.6 2V6.6M1.8 2H3.4M1.8 6.6H3.4' stroke='#444' stroke-width='.9' fill='none'/></svg>
<svg style='position:absolute;left:428px;top:31px;overflow:visible' width='32' height='31' viewBox='0 0 32 31'><g opacity='.16' transform='translate(.5 .9)'><g fill='none' stroke='#000' stroke-linecap='round' stroke-linejoin='round'><path d='M13.7 3.4C12.2 6.4 11 10.4 9.8 15.2C8.8 19.6 8 23 6.6 26' stroke-width='3.80'/><path d='M13.2 4.2C14.2 1.4 16.4 .5 18.3 1.7' stroke-width='2.20'/><path d='M7 25.2C5.6 28.8 3.4 30 1.7 28.3' stroke-width='2.30'/><path d='M6 9.1H16.2' stroke-width='1.70' stroke-linecap='butt'/><path d='M14.3 13.3C15 11.2 16.2 9.9 17.6 10.5' stroke-width='1.50'/><path d='M17.4 10.6C19.4 12.4 22 18.6 24.4 21.6' stroke-width='4.10' stroke-linecap='butt'/><path d='M23.6 21.4C25.6 23.6 27.8 21.2 29 18.3' stroke-width='1.90'/><path d='M28.4 11.5C26 10.3 24.4 12.6 22 15.4C19.6 18.2 18.2 22.6 15.6 21.3' stroke-width='1.80'/></g><g fill='#000'><circle cx='18' cy='2.1' r='1.55'/><circle cx='2.2' cy='27.9' r='1.75'/><circle cx='28.3' cy='11.5' r='1.50'/><circle cx='15.7' cy='20.7' r='1.65'/></g></g><g fill='none' stroke='#1e1e1e' stroke-linecap='round' stroke-linejoin='round'><path d='M13.7 3.4C12.2 6.4 11 10.4 9.8 15.2C8.8 19.6 8 23 6.6 26' stroke-width='3.80'/><path d='M13.2 4.2C14.2 1.4 16.4 .5 18.3 1.7' stroke-width='2.20'/><path d='M7 25.2C5.6 28.8 3.4 30 1.7 28.3' stroke-width='2.30'/><path d='M6 9.1H16.2' stroke-width='1.70' stroke-linecap='butt'/><path d='M14.3 13.3C15 11.2 16.2 9.9 17.6 10.5' stroke-width='1.50'/><path d='M17.4 10.6C19.4 12.4 22 18.6 24.4 21.6' stroke-width='4.10' stroke-linecap='butt'/><path d='M23.6 21.4C25.6 23.6 27.8 21.2 29 18.3' stroke-width='1.90'/><path d='M28.4 11.5C26 10.3 24.4 12.6 22 15.4C19.6 18.2 18.2 22.6 15.6 21.3' stroke-width='1.80'/></g><g fill='#1e1e1e'><circle cx='18' cy='2.1' r='1.55'/><circle cx='2.2' cy='27.9' r='1.75'/><circle cx='28.3' cy='11.5' r='1.50'/><circle cx='15.7' cy='20.7' r='1.65'/></g></svg>
<svg style='position:absolute;left:445px;top:33.2px;overflow:visible' width='13' height='12' viewBox='0 0 13 12'><path d='M1.6 1.4L11 10.4M11 1.4L1.6 10.4' stroke='#e01414' stroke-width='3.2' fill='none'/></svg>
<svg style='position:absolute;left:482.4px;top:31px;overflow:visible' width='32' height='30' viewBox='0 0 32 30'><defs><radialGradient id='n15' cx='.4' cy='.3' r='.7'><stop offset='0' stop-color='#e8ffff'/><stop offset='.45' stop-color='#3fd6f7'/><stop offset='1' stop-color='#0a9fe0'/></radialGradient><radialGradient id='e16' cx='.4' cy='.3' r='.7'><stop offset='0' stop-color='#f4f6ff'/><stop offset='.45' stop-color='#9dbcff'/><stop offset='1' stop-color='#3f7fff'/></radialGradient><linearGradient id='o17' gradientUnits='userSpaceOnUse' x1='-15' y1='0' x2='15' y2='0'><stop offset='0' stop-color='#7a7a7a'/><stop offset='1' stop-color='#b4b4b4'/></linearGradient><linearGradient id='o18' gradientUnits='userSpaceOnUse' x1='-15' y1='0' x2='15' y2='0'><stop offset='0' stop-color='#b6b6b6'/><stop offset='1' stop-color='#7c7c7c'/></linearGradient></defs><g transform='translate(15.6 14.8) scale(1)'><ellipse cx='0' cy='14' rx='12' ry='1.6' fill='#000' opacity='.13'/><ellipse cx='0' cy='0' rx='15.2' ry='5.8' transform='rotate(-5)' fill='none' stroke='url(#o17)' stroke-width='1.7' opacity='.95'/><ellipse cx='0' cy='0' rx='15.2' ry='5.8' transform='rotate(-5)' fill='none' stroke='#ececec' stroke-width='0.55' opacity='.9'/><ellipse cx='0' cy='0' rx='15.2' ry='5.8' transform='rotate(61)' fill='none' stroke='url(#o18)' stroke-width='1.7' opacity='.95'/><ellipse cx='0' cy='0' rx='15.2' ry='5.8' transform='rotate(61)' fill='none' stroke='#ececec' stroke-width='0.55' opacity='.9'/><ellipse cx='0' cy='0' rx='15.2' ry='5.8' transform='rotate(119)' fill='none' stroke='url(#o18)' stroke-width='1.7' opacity='.95'/><ellipse cx='0' cy='0' rx='15.2' ry='5.8' transform='rotate(119)' fill='none' stroke='#ececec' stroke-width='0.55' opacity='.9'/><circle cx='0' cy='.3' r='4.4' fill='url(#n15)'/><circle cx='-6.8' cy='0.1' r='2.35' fill='url(#e16)'/><circle cx='4.3' cy='7.2' r='2.35' fill='url(#e16)'/><circle cx='4.2' cy='-5.6' r='2.35' fill='url(#e16)'/></g><defs><linearGradient id='un14' x1='0' y1='0' x2='.9' y2='1'><stop offset='0' stop-color='#ffe24a'/><stop offset='.55' stop-color='#e9ad2a'/><stop offset='.85' stop-color='#d89a2a' stop-opacity='.85'/><stop offset='1' stop-color='#d89a2a' stop-opacity='.15'/></linearGradient></defs><path d='M15.9 1.4C18 .4 21 .2 23.4 .6C27 1.2 30 3.6 31 8C31.4 10 31.3 11.4 31.2 12.8L27.5 12.8C27.8 10.4 27.6 8.6 26.6 7C25.4 5.2 23.6 4.8 21.7 5.3L22.3 7.6L15.9 7.6Z' fill='url(#un14)' stroke='#c9962a' stroke-width='.4' stroke-opacity='.6'/></svg>
<svg style='position:absolute;left:534.5px;top:31px;overflow:visible' width='31' height='31' viewBox='0 0 31 31'><defs><linearGradient id='gg19' x1='0' y1='0' x2='.6' y2='1'><stop offset='0' stop-color='#f2f2f8'/><stop offset='.5' stop-color='#c0c0d6'/><stop offset='1' stop-color='#9494b2'/></linearGradient><radialGradient id='gh20' cx='.45' cy='.4' r='.6'><stop offset='0' stop-color='#e9e9f3'/><stop offset='1' stop-color='#b4b4cc'/></radialGradient></defs><path d='M18.40 10.30 L20.26 11.17 L20.01 12.69 L17.97 12.91 L17.47 14.06 L18.72 15.70 L17.79 16.93 L15.87 16.18 L14.90 16.97 L15.24 18.99 L13.85 19.65 L12.50 18.09 L11.28 18.34 L10.64 20.29 L9.09 20.23 L8.63 18.23 L7.43 17.87 L5.95 19.31 L4.62 18.53 L5.14 16.54 L4.24 15.67 L2.27 16.26 L1.45 14.95 L2.83 13.43 L2.44 12.24 L0.42 11.84 L0.30 10.30 L2.23 9.60 L2.44 8.36 L0.84 7.07 L1.45 5.65 L3.48 5.93 L4.24 4.93 L3.42 3.04 L4.62 2.07 L6.30 3.26 L7.43 2.73 L7.58 0.68 L9.09 0.37 L10.03 2.20 L11.28 2.26 L12.36 0.52 L13.85 0.95 L13.82 3.00 L14.90 3.63 L16.67 2.59 L17.79 3.67 L16.81 5.48 L17.47 6.54 L19.52 6.44 L20.01 7.91 L18.30 9.05Z M8.60 10.30 a1.70 1.70 0 1 0 3.40 0 a1.70 1.70 0 1 0 -3.40 0Z' fill='url(#gg19)' stroke='#9a9ab4' stroke-width='.45' fill-rule='evenodd'/><circle cx='10.3' cy='10.3' r='5.6' fill='url(#gh20)' opacity='.9'/><circle cx='10.3' cy='10.3' r='1.7' fill='#fff' stroke='#a9a9c2' stroke-width='.5'/><path d='M28.20 23.20 L29.76 23.98 L29.49 25.34 L27.75 25.47 L27.25 26.44 L28.14 27.94 L27.18 28.94 L25.64 28.11 L24.69 28.66 L24.63 30.40 L23.28 30.72 L22.44 29.20 L21.35 29.14 L20.35 30.57 L19.04 30.11 L19.16 28.37 L18.27 27.73 L16.66 28.40 L15.81 27.31 L16.85 25.91 L16.44 24.89 L14.73 24.58 L14.60 23.20 L16.23 22.58 L16.44 21.51 L15.17 20.32 L15.81 19.09 L17.51 19.46 L18.27 18.67 L17.84 16.98 L19.04 16.29 L20.28 17.52 L21.35 17.26 L21.90 15.61 L23.28 15.68 L23.66 17.38 L24.69 17.74 L26.05 16.65 L27.18 17.46 L26.57 19.09 L27.25 19.96 L28.98 19.77 L29.49 21.06 L28.10 22.11Z M20.70 23.20 a1.50 1.50 0 1 0 3.00 0 a1.50 1.50 0 1 0 -3.00 0Z' fill='url(#gg19)' stroke='#9a9ab4' stroke-width='.45' fill-rule='evenodd'/><circle cx='22.2' cy='23.2' r='4.1' fill='url(#gh20)' opacity='.9'/><circle cx='22.2' cy='23.2' r='1.5' fill='#fff' stroke='#a9a9c2' stroke-width='.5'/></svg>
<svg style='position:absolute;left:582.7px;top:31px;overflow:visible' width='32' height='31' viewBox='0 0 32 31'><defs><linearGradient id='w21' x1='0' y1='0' x2='1' y2='0'><stop offset='0' stop-color='#f7b000'/><stop offset='.45' stop-color='#f27c10'/><stop offset='.75' stop-color='#f9a800'/><stop offset='1' stop-color='#ffd61e'/></linearGradient></defs><path d='M15 4L8 15L19.5 20.5Z' fill='#000' opacity='.05'/><path d='M15.4 6L11 16L20 21Z' fill='#000' opacity='.05'/><g transform='rotate(-13 15.6 9)' fill='none' stroke='url(#w21)' stroke-linecap='round'><path d='M1 9A14.6 5.3 0 0 1 13 3.8' stroke-width='1.3'/><path d='M19.5 3.9A14.6 5.3 0 0 1 30.2 9' stroke-width='1.9'/></g><path d='M15.2 4.2L24.6 30' stroke='#0c0c0c' stroke-width='3.1' stroke-linecap='round'/><path d='M15.6 5.4L16.7 8.4' stroke='#e4e4e4' stroke-width='3.1' stroke-linecap='butt'/><path d='M14.5 2.4L15.3 4.6' stroke='#0c0c0c' stroke-width='3.1' stroke-linecap='round'/><g transform='rotate(-13 15.6 9)' fill='none' stroke='url(#w21)' stroke-linecap='round'><path d='M30.2 9A14.6 5.3 0 0 1 1 9' stroke-width='2.1'/></g><path d='M8.80 6.90L9.36 8.24L10.80 8.35L9.70 9.29L10.03 10.70L8.80 9.95L7.57 10.70L7.90 9.29L6.80 8.35L8.24 8.24Z' fill='#f2703c'/><path d='M7.80 13.50L8.36 14.84L9.80 14.95L8.70 15.89L9.03 17.30L7.80 16.54L6.57 17.30L6.90 15.89L5.80 14.95L7.24 14.84Z' fill='#f2703c'/><path d='M25.80 19.80L26.38 21.20L27.89 21.32L26.74 22.31L27.09 23.78L25.80 22.99L24.51 23.78L24.86 22.31L23.71 21.32L25.22 21.20Z' fill='#f2703c'/><rect x='3.6' y='4' width='1.6' height='.9' fill='#f2703c'/></svg>
<svg style='position:absolute;left:9px;top:126px;overflow:visible' width='15' height='14' viewBox='0 0 15 14'><defs><linearGradient id='tg22' x1='0' y1='0' x2='1' y2='1'><stop offset='0' stop-color='#ffd400'/><stop offset='1' stop-color='#f2a300'/></linearGradient></defs><ellipse cx='7' cy='13.4' rx='5' ry='.9' fill='#000' opacity='.10'/><path d='M.8 .6H6.4L13.8 7.4L7.8 13L.4 5.8Z' fill='url(#tg22)' stroke='#f0b400' stroke-width='.5' stroke-linejoin='round'/><path d='M6.4 4.4L10.8 8.2L7.8 10.8L3.6 7Z' fill='#f4a800' opacity='.55'/><path d='M3.2 3.2C3.8 5.6 3.4 8.6 2.2 11.6' stroke='#8a7a2a' stroke-width='.8' fill='none'/><circle cx='3.2' cy='3.2' r='.7' fill='#6b5a1a'/></svg>
<svg style='position:absolute;left:358.8px;top:123.3px;overflow:visible' width='18.4' height='18.4' viewBox='0 0 18.4 18.4'><defs><linearGradient id='in23' x1='0' y1='0' x2='0' y2='1'><stop offset='0' stop-color='#6a9ad6'/><stop offset='.52' stop-color='#3d79c6'/><stop offset='.56' stop-color='#0c52b2'/><stop offset='.85' stop-color='#0a5cc4'/><stop offset='1' stop-color='#1a84ec'/></linearGradient></defs><circle cx='9.2' cy='9.2' r='8.9' fill='url(#in23)'/><circle cx='9.2' cy='4.9' r='1.35' fill='#fff'/><path d='M7.1 7.7H10.2V12.7H11.6V13.8H6.8V12.7H8.2V8.8H7.1Z' fill='#fff'/></svg>
<svg style='position:absolute;left:31px;top:155px;overflow:visible' width='16' height='15' viewBox='0 0 16 15'><defs><radialGradient id='n24' cx='.4' cy='.3' r='.7'><stop offset='0' stop-color='#e8ffff'/><stop offset='.45' stop-color='#3fd6f7'/><stop offset='1' stop-color='#0a9fe0'/></radialGradient><radialGradient id='e25' cx='.4' cy='.3' r='.7'><stop offset='0' stop-color='#f4f6ff'/><stop offset='.45' stop-color='#9dbcff'/><stop offset='1' stop-color='#3f7fff'/></radialGradient><linearGradient id='o26' gradientUnits='userSpaceOnUse' x1='-15' y1='0' x2='15' y2='0'><stop offset='0' stop-color='#7a7a7a'/><stop offset='1' stop-color='#b4b4b4'/></linearGradient><linearGradient id='o27' gradientUnits='userSpaceOnUse' x1='-15' y1='0' x2='15' y2='0'><stop offset='0' stop-color='#b6b6b6'/><stop offset='1' stop-color='#7c7c7c'/></linearGradient></defs><g transform='translate(8 7.4) scale(0.46)'><ellipse cx='0' cy='14' rx='12' ry='1.6' fill='#000' opacity='.13'/><ellipse cx='0' cy='0' rx='15.2' ry='5.8' transform='rotate(-5)' fill='none' stroke='url(#o26)' stroke-width='2.6' opacity='.95'/><ellipse cx='0' cy='0' rx='15.2' ry='5.8' transform='rotate(-5)' fill='none' stroke='#ececec' stroke-width='0.5' opacity='.9'/><ellipse cx='0' cy='0' rx='15.2' ry='5.8' transform='rotate(61)' fill='none' stroke='url(#o27)' stroke-width='2.6' opacity='.95'/><ellipse cx='0' cy='0' rx='15.2' ry='5.8' transform='rotate(61)' fill='none' stroke='#ececec' stroke-width='0.5' opacity='.9'/><ellipse cx='0' cy='0' rx='15.2' ry='5.8' transform='rotate(119)' fill='none' stroke='url(#o27)' stroke-width='2.6' opacity='.95'/><ellipse cx='0' cy='0' rx='15.2' ry='5.8' transform='rotate(119)' fill='none' stroke='#ececec' stroke-width='0.5' opacity='.9'/><circle cx='0' cy='.3' r='5.6' fill='url(#n24)'/><circle cx='-6.8' cy='0.1' r='3.7' fill='url(#e25)'/><circle cx='4.3' cy='7.2' r='3.7' fill='url(#e25)'/><circle cx='4.2' cy='-5.6' r='3.7' fill='url(#e25)'/></g></svg>
<svg style='position:absolute;left:52.2px;top:175.2px;overflow:visible' width='17' height='15' viewBox='0 0 17 15'><g transform='scale(.55 .5)'><g fill='none' stroke='#26262e' stroke-linecap='round' stroke-linejoin='round'><path d='M13.7 3.4C12.2 6.4 11 10.4 9.8 15.2C8.8 19.6 8 23 6.6 26' stroke-width='4.26'/><path d='M13.2 4.2C14.2 1.4 16.4 .5 18.3 1.7' stroke-width='2.46'/><path d='M7 25.2C5.6 28.8 3.4 30 1.7 28.3' stroke-width='2.58'/><path d='M6 9.1H16.2' stroke-width='1.90' stroke-linecap='butt'/><path d='M14.3 13.3C15 11.2 16.2 9.9 17.6 10.5' stroke-width='1.68'/><path d='M17.4 10.6C19.4 12.4 22 18.6 24.4 21.6' stroke-width='4.59' stroke-linecap='butt'/><path d='M23.6 21.4C25.6 23.6 27.8 21.2 29 18.3' stroke-width='2.13'/><path d='M28.4 11.5C26 10.3 24.4 12.6 22 15.4C19.6 18.2 18.2 22.6 15.6 21.3' stroke-width='2.02'/></g><g fill='#26262e'><circle cx='18' cy='2.1' r='1.40'/><circle cx='2.2' cy='27.9' r='1.57'/><circle cx='28.3' cy='11.5' r='1.35'/><circle cx='15.7' cy='20.7' r='1.48'/></g></g></svg>
<svg style='position:absolute;left:553px;top:222px;overflow:visible' width='16' height='16' viewBox='0 0 16 16'><path d='M6.5 3L9.6 11M13.6 5.2L10 10.6M2.4 13.2L9.4 11.2' stroke='#a8a8a8' stroke-width='1.5' fill='none'/><circle cx='9.8' cy='11.4' r='4' fill='#8c8c8c' opacity='.85'/><circle cx='9.8' cy='11.2' r='2.6' fill='#35c2f2'/><circle cx='9.3' cy='10.6' r='1.2' fill='#7fe0ff'/><circle cx='6.6' cy='3.3' r='2.7' fill='#9a9a9a' opacity='.55'/><circle cx='6.5' cy='2.9' r='2.4' fill='#e264e6'/><circle cx='6.1' cy='2.4' r='1' fill='#f4a0f6'/><circle cx='13.7' cy='5.2' r='1.15' fill='#e6b62e'/><circle cx='2.5' cy='13.5' r='2' fill='#9a9a9a' opacity='.5'/><circle cx='2.4' cy='13.2' r='1.7' fill='#7ccc3e'/></svg>
<svg style='position:absolute;left:930.3px;top:122px;overflow:visible' width='9' height='16' viewBox='0 0 9 16'><path d='M1.6 3.9C3.6 3.3 6 3.6 7.2 5.2C8 6.6 7.9 8.6 7.2 10.2C6.7 11.4 6.2 12.2 6 13.2C5.8 14.8 4.8 15.9 3.6 15.9C2.2 15.9 1.4 14.6 1.7 13.2C2 11.8 3 11 3.2 9.6C3.4 8 2.4 7 1.8 6C1.3 5.2 1.1 4.3 1.6 3.9Z' fill='#000'/><ellipse cx='1.4' cy='1.5' rx='.95' ry='1.35' fill='#000'/><ellipse cx='3.4' cy='1.5' rx='.7' ry='.8' fill='#111'/><ellipse cx='4.9' cy='1.9' rx='.6' ry='.65' fill='#222'/><ellipse cx='6.2' cy='2.4' rx='.55' ry='.55' fill='#333'/><ellipse cx='7.3' cy='3.1' rx='.5' ry='.45' fill='#555'/></svg>
<svg style='position:absolute;left:1079.6px;top:122.8px;overflow:visible' width='14' height='15' viewBox='0 0 14 15'><defs><linearGradient id='lk28' x1='0' y1='0' x2='1' y2='1'><stop offset='0' stop-color='#ecd08e'/><stop offset='.5' stop-color='#d9b466'/><stop offset='1' stop-color='#b98a3a'/></linearGradient></defs><path d='M9.4 12.6L14 12L9.6 14.2Z' fill='#000' opacity='.25'/><path d='M2.6 5.4V3.4C2.6 .2 8.2 .2 8.2 3.4V6' fill='none' stroke='#b9b9b9' stroke-width='1.5'/><path d='M.4 4.6L7.2 4L11 6L10.4 13L7 14.2L.8 11.4Z' fill='url(#lk28)'/></svg>
</body></html>
